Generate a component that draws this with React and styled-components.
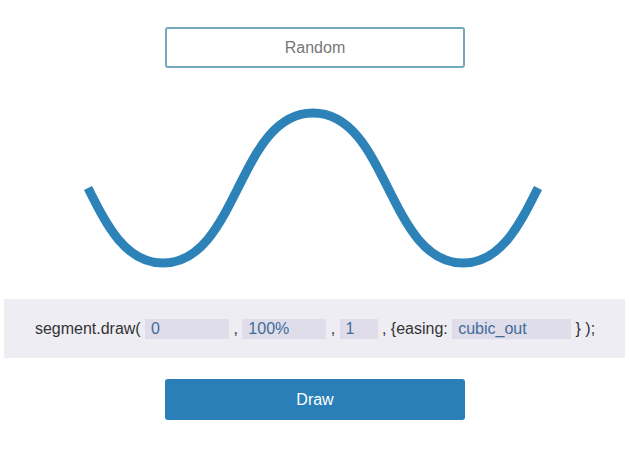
import React from 'react'
import styled, { createGlobalStyle } from 'styled-components'

const GlobalStyle = createGlobalStyle`
body {
    margin: 0;
    background: #fff;
    font-family: "Liberation Sans", Arial, sans-serif;
}
`

// wave made of cubic halves with horizontal tangents at the peaks / troughs
const WAVE =
    'M 88 188 C 106.75 225.5 125.5 263 163 263 ' +
    'C 238 263 238 113 313 113 ' +
    'C 388 113 388 263 463 263 ' +
    'C 500.5 263 519.25 225.5 538 188'

function App() {
    return (
        <Page>
            <GlobalStyle />
            <RandomButton>Random</RandomButton>
            <Wave viewBox="83 100 460 175" width="460" height="175">
                <path d={WAVE} fill="none" stroke="#2d82b8" strokeWidth="9" />
            </Wave>
            <CodeBar>
                <Code>
                    segment.draw(
                    <Field w={84} defaultValue="0" />
                    ,
                    <Field w={84} defaultValue="100%" />
                    ,
                    <Field w={38} defaultValue="1" />
                    , {'{'}easing:
                    <Field w={119} defaultValue="cubic_out" />
                    {'}'} );
                </Code>
            </CodeBar>
            <DrawButton>Draw</DrawButton>
        </Page>
    )
}

export default App

const Page = styled.div`
padding-top: 27px;
display: flex;
flex-direction: column;
align-items: center;
`

const RandomButton = styled.button`
box-sizing: border-box;
width: 300px;
height: 41px;
margin-left: 1px;
background: #fff;
border: 2px solid #73abbc;
border-radius: 3px;
color: #777;
font-family: "Liberation Sans", Arial, sans-serif;
font-size: 16px;
cursor: pointer;
`

const Wave = styled.svg`
display: block;
margin-top: 32px;
margin-left: -3px;
`

const CodeBar = styled.div`
align-self: stretch;
margin: 24px 4px 0;
height: 59px;
background: #eeedf3;
display: flex;
align-items: center;
justify-content: center;
`

const Code = styled.div`
display: flex;
align-items: center;
gap: 4.4px;
padding-top: 1px;
margin-left: 1px;
color: #333;
font-size: 16px;
white-space: pre;
`

const Field = styled.input`
box-sizing: border-box;
width: ${props => props.w}px;
height: 20px;
margin: 0;
padding: 0 6px;
border: none;
outline: none;
background: #dfdde9;
color: #3f6c9b;
font-family: "Liberation Sans", Arial, sans-serif;
font-size: 16px;
`

const DrawButton = styled.button`
box-sizing: border-box;
width: 300px;
height: 41px;
margin-top: 21px;
margin-left: 1px;
background: #2a7fb8;
border: none;
border-radius: 3px;
color: #fff;
font-family: "Liberation Sans", Arial, sans-serif;
font-size: 16px;
cursor: pointer;
`
